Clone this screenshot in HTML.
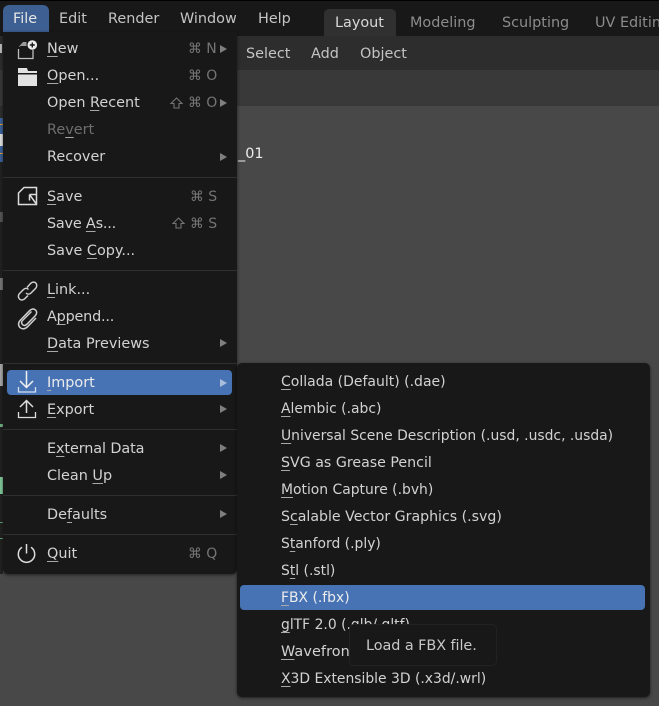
<!DOCTYPE html>
<html><head><meta charset="utf-8"><title>Blender File Import</title>
<style>
html,body{margin:0;padding:0;background:#484848}
#r{position:relative;width:659px;height:706px;overflow:hidden;background:#484848;font-family:"DejaVu Sans",sans-serif;font-size:14.4px;color:#d2d2d2}
.a{position:absolute}
.t{position:absolute;white-space:nowrap;line-height:26px;height:26px;margin-top:1px}
.k{font-size:14px;letter-spacing:-.1px}
.m{font-size:13.9px}
u{text-decoration:underline;text-decoration-thickness:1.4px;text-underline-offset:3px;text-decoration-skip-ink:none;text-decoration-color:#a8a8a8}
.sep{position:absolute;height:1px;background:#2f2f2f;left:3px;width:234px}
.ar{position:absolute;left:220px;width:0;height:0;border-left:7px solid #7f7f7f;border-top:4px solid transparent;border-bottom:4px solid transparent}
svg{position:absolute;overflow:visible}
</style></head><body>
<div id="r">
<div class="a" style="left:0;top:0;width:659px;height:1px;background:#000"></div>
<div class="a" style="left:0;top:1px;width:659px;height:35px;background:#181818"></div>
<div class="a" style="left:0;top:36px;width:659px;height:34px;background:#2d2d2d"></div>
<div class="a" style="left:0;top:70px;width:659px;height:36px;background:#393939"></div>
<div class="a" style="left:324px;top:9px;width:72px;height:27px;background:#303030;border-radius:5px 5px 0 0"></div>
<div class="a" style="left:3px;top:5px;width:46px;height:28px;background:#3d5f92;border-radius:6px 6px 0 0"></div>
<div class="t" style="left:13px;top:5px;color:#e6e6e6">File</div>
<div class="t" style="left:59px;top:5px;color:#c4c4c4">Edit</div>
<div class="t" style="left:108px;top:5px;color:#c4c4c4">Render</div>
<div class="t" style="left:180px;top:5px;color:#c4c4c4">Window</div>
<div class="t" style="left:258px;top:5px;color:#c4c4c4">Help</div>
<div class="t" style="left:335px;top:9px;color:#d8d8d8">Layout</div>
<div class="t" style="left:410px;top:9px;color:#8c8c8c">Modeling</div>
<div class="t" style="left:502px;top:9px;color:#8c8c8c">Sculpting</div>
<div class="t" style="left:595px;top:9px;color:#8c8c8c">UV Editing</div>
<div class="t" style="left:246px;top:40px;color:#c4c4c4">Select</div>
<div class="t" style="left:311px;top:40px;color:#c4c4c4">Add</div>
<div class="t" style="left:360px;top:40px;color:#c4c4c4">Object</div>
<div class="t" style="left:238px;top:140px;color:#ececec">_01</div>

<div class="a" style="left:0;top:106px;width:3px;height:12px;background:#2e2e2e"></div>
<div class="a" style="left:0;top:118px;width:3px;height:44px;background:#3d6297"></div>
<div class="a" style="left:0;top:124px;width:3px;height:1px;background:#e39a2a"></div>
<div class="a" style="left:0;top:153px;width:3px;height:1px;background:#e39a2a"></div>
<div class="a" style="left:0;top:134px;width:3px;height:12px;background:#e0e0e0"></div>
<div class="a" style="left:0;top:162px;width:3px;height:412px;background:#222"></div>
<div class="a" style="left:0;top:44px;width:2px;height:9px;background:#bbb"></div>
<div class="a" style="left:0;top:212px;width:3px;height:10px;background:#555"></div>
<div class="a" style="left:0;top:278px;width:3px;height:12px;background:#777"></div>
<div class="a" style="left:0;top:364px;width:3px;height:22px;background:#a8a8a8"></div>
<div class="a" style="left:0;top:477px;width:3px;height:17px;background:#7fc79a"></div>
<div class="a" style="left:0;top:424px;width:3px;height:3px;background:#6fae86"></div>
<div class="a" style="left:0;top:522px;width:3px;height:1px;background:#5f9a72"></div>
<div class="a" style="left:0;top:538px;width:3px;height:1px;background:#5f9a72"></div>

<div class="a" style="left:3px;top:32px;width:234px;height:542px;background:#181818;border-radius:0 0 5px 5px;box-shadow:0 1px 3px rgba(0,0,0,.55)"></div>
<div class="sep" style="top:177px"></div>
<div class="sep" style="top:270px"></div>
<div class="sep" style="top:363px"></div>
<div class="sep" style="top:429px"></div>
<div class="sep" style="top:495px"></div>
<div class="sep" style="top:534px"></div>
<div class="a" style="left:7px;top:370px;width:225px;height:25px;background:#4772b3;border-radius:4px"></div>

<div class="t" style="left:47px;top:35px"><u>N</u>ew</div>
<div class="t" style="left:47px;top:62px"><u>O</u>pen...</div>
<div class="t" style="left:47px;top:89px">Open <u>R</u>ecent</div>
<div class="t" style="left:47px;top:116px;color:#6e6e6e">Re<u>v</u>ert</div>
<div class="t" style="left:47px;top:143px">Recover</div>
<div class="t" style="left:47px;top:183px"><u>S</u>ave</div>
<div class="t" style="left:47px;top:210px;letter-spacing:-.2px">Save <u>A</u>s...</div>
<div class="t" style="left:47px;top:237px">Save <u>C</u>opy...</div>
<div class="t" style="left:47px;top:276px"><u>L</u>ink...</div>
<div class="t" style="left:47px;top:303px;letter-spacing:-.2px">A<u>p</u>pend...</div>
<div class="t" style="left:47px;top:330px"><u>D</u>ata Previews</div>
<div class="t" style="left:47px;top:369px;color:#ececec"><u>I</u>mport</div>
<div class="t" style="left:47px;top:396px"><u>E</u>xport</div>
<div class="t" style="left:47px;top:435px;letter-spacing:-.1px">E<u>x</u>ternal Data</div>
<div class="t" style="left:47px;top:462px">Clean <u>U</u>p</div>
<div class="t" style="left:47px;top:501px">De<u>f</u>aults</div>
<div class="t" style="left:47px;top:540px"><u>Q</u>uit</div>

<div class="t k" style="left:188px;top:35px;color:#747474">⌘ N</div>
<div class="t k" style="left:188px;top:62px;color:#747474">⌘ O</div>
<div class="t k" style="left:188px;top:89px;color:#747474">⌘ O</div>
<div class="t k" style="left:190px;top:183px;color:#747474">⌘ S</div>
<div class="t k" style="left:190px;top:210px;color:#747474">⌘ S</div>
<div class="t k" style="left:188px;top:540px;color:#747474">⌘ Q</div>

<div class="ar" style="top:45px"></div>
<div class="ar" style="top:99px"></div>
<div class="ar" style="top:153px"></div>
<div class="ar" style="top:339px"></div>
<div class="ar" style="top:379px;border-left-color:#a9bedd"></div>
<div class="ar" style="top:405px"></div>
<div class="ar" style="top:444px"></div>
<div class="ar" style="top:471px"></div>
<div class="ar" style="top:510px"></div>

<svg style="left:0;top:0" width="40" height="600" fill="none" stroke="#dcdcdc" stroke-width="1.3">
<path d="M176.5 98L182 103.5H179V108H174V103.5H171Z" stroke="#747474" stroke-width="1.1"/>
<path d="M178.5 218L184 223.5H181V228H176V223.5H173Z" stroke="#747474" stroke-width="1.1"/>
<path d="M18.5 49V58.5H33V50" stroke="#bdbdbd"/>
<path d="M18.5 47L23 42H26.5V46H21Z" fill="#9a9a9a" stroke="none"/>
<circle cx="32.3" cy="45" r="4.8" fill="#ececec" stroke="none"/>
<path d="M29.8 45H34.8M32.3 42.5V47.5" stroke="#181818" stroke-width="1.4"/>
<path d="M18 68H27L28 71H37V73H18Z" fill="#e2e2e2" stroke="none"/>
<rect x="18" y="74.5" width="19" height="11.5" fill="#e2e2e2" stroke="none"/>
<path d="M24 187.5H36.5V204.5H18.5V193Z" stroke-width="1.5"/>
<path d="M36 203.5L29.5 194.5M29.5 194.5V200.5M29.5 194.5H36" stroke-width="1.5"/>
<g stroke-width="1.5" stroke="#cfcfcf">
<path d="M27 287.5L30.5 283.5C32 282 34.5 281.5 35.8 283C37.2 284.5 37 287 35.5 288.5L31 293C29.5 294.5 27.5 294.5 26 293"/>
<path d="M28.5 289.5C27 288 25 288 23.5 289.5L19.5 293.5C18 295 18 297.5 19.5 299C21 300.5 23.3 300.3 25 298.5L28 295.5"/>
<path d="M31.5 311.5L22.5 320.5C21 322 21.5 323.8 22.7 324.8C24 325.8 25.5 325.7 27 324.2L35 316C37 314 37.2 311.5 35.5 310C33.8 308.5 31.5 308.7 29.5 310.7L20.5 320C18 322.5 18 325.5 20 327.5C22 329.5 25 329.2 27.5 326.8L36 318"/>
</g>
<path d="M26.5 371V387M20 381L26.5 387.5L33 381" stroke="#f2f2f2" stroke-width="1.5"/>
<path d="M18.5 387V392H35.5V387" stroke="#d6dfee"/>
<path d="M26.5 413V400.5M20 407L26.5 400.5L33 407" stroke="#dcdcdc" stroke-width="1.5"/>
<path d="M18.5 412V417.5H35.5V412"/>
<path d="M26.5 544V553.5" stroke-width="1.5"/>
<path d="M22 547.3A8.2 8.2 0 1 0 31 547.3" stroke-width="1.5"/>
</svg>

<div class="a" style="left:237px;top:363px;width:413px;height:334px;background:#181818;border-radius:5px;box-shadow:0 1px 3px rgba(0,0,0,.6)"></div>
<div class="a" style="left:240px;top:585px;width:405px;height:25px;background:#4772b3;border-radius:4px"></div>
<div class="t m" style="left:281px;top:368px;font-size:14px"><u>C</u>ollada (Default) (.dae)</div>
<div class="t m" style="left:281px;top:395px"><u>A</u>lembic (.abc)</div>
<div class="t m" style="left:281px;top:422px"><u>U</u>niversal Scene Description (.usd, .usdc, .usda)</div>
<div class="t m" style="left:281px;top:449px;font-size:14.2px"><u>S</u>VG as Grease Pencil</div>
<div class="t m" style="left:281px;top:476px"><u>M</u>otion Capture (.bvh)</div>
<div class="t m" style="left:281px;top:503px;font-size:14.15px">S<u>c</u>alable Vector Graphics (.svg)</div>
<div class="t m" style="left:281px;top:530px">S<u>t</u>anford (.ply)</div>
<div class="t m" style="left:281px;top:557px">S<u>t</u>l (.stl)</div>
<div class="t m" style="left:281px;top:584px;color:#ececec"><u>F</u>BX (.fbx)</div>
<div class="t m" style="left:281px;top:611px"><u>g</u>lTF 2.0 (.glb/.gltf)</div>
<div class="t" style="left:281px;top:638px;letter-spacing:.1px"><u>W</u>avefront (.obj)</div>
<div class="t m" style="left:281px;top:665px"><u>X</u>3D Extensible 3D (.x3d/.wrl)</div>

<div class="a" style="left:349px;top:624px;width:148px;height:42px;background:#181818;border-radius:5px;border:1px solid #222;box-sizing:border-box"></div>
<div class="t" style="left:366px;top:632px;color:#c8c8c8;letter-spacing:-.05px">Load a FBX file.</div>
</div>
</body></html>
